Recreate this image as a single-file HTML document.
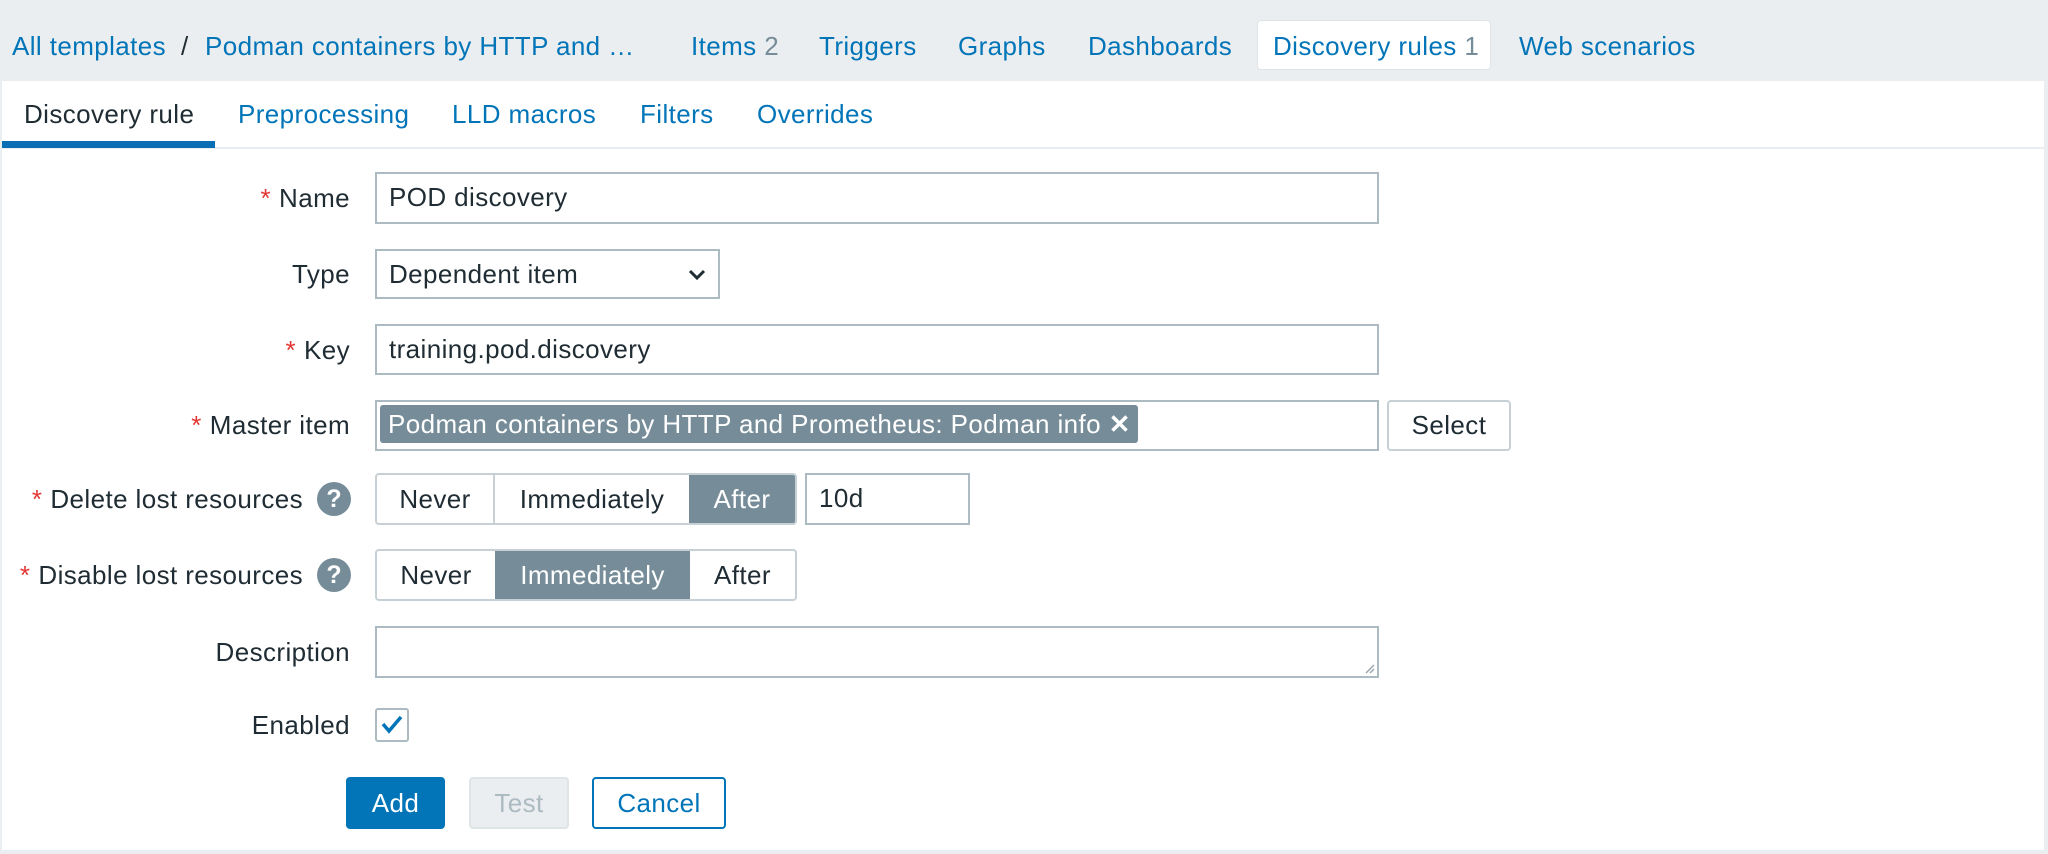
<!DOCTYPE html>
<html><head><meta charset="utf-8"><style>
*{box-sizing:border-box;margin:0;padding:0}
body{width:2048px;height:854px;background:#ebeef0;font-family:"Liberation Sans",Arial,sans-serif;font-size:26px;letter-spacing:0.4px;color:#1f2c33;position:relative;overflow:hidden}
.a{position:absolute;white-space:nowrap}
.lk{color:#0275b8}
.g{color:#768d99}
.top{line-height:48px;top:22px}
.main{position:absolute;left:2px;top:81px;width:2042px;height:769px;background:#fff}
.tabline{position:absolute;left:2px;top:147px;width:2042px;height:2px;background:#ebeef0}
.lbl{position:absolute;right:1698px;text-align:right;line-height:50px;white-space:nowrap}
.req{color:#e33734;margin-right:8px}
.inp{position:absolute;border:2px solid #acbbc2;background:#fff;line-height:46px;padding-left:12px}
.seg{position:absolute;border:2px solid #c7d0d5;border-radius:4px;display:flex;overflow:hidden;background:#fff}
.seg div{text-align:center;line-height:48px}
.seg .on{background:#768d99;color:#fff}
.q{position:absolute;width:34px;height:34px;border-radius:50%;background:#768d99;color:#fff;font-weight:bold;text-align:center;line-height:34px;font-size:25px;letter-spacing:0}
.btn{position:absolute;border-radius:4px;text-align:center;line-height:48px}
</style></head><body>
<div class="a lk top" style="left:12px">All templates</div>
<div class="a top" style="left:181px">/</div>
<div class="a lk top" style="left:205px">Podman containers by HTTP and …</div>
<div class="a lk top" style="left:691px">Items <span class="g">2</span></div>
<div class="a lk top" style="left:819px">Triggers</div>
<div class="a lk top" style="left:958px">Graphs</div>
<div class="a lk top" style="left:1088px">Dashboards</div>
<div class="a" style="left:1258px;top:21px;width:232px;height:48px;background:#fff;border-radius:3px;box-shadow:0 0 0 1px #dfe4e7"></div>
<div class="a lk top" style="left:1273px">Discovery rules <span class="g">1</span></div>
<div class="a lk top" style="left:1519px">Web scenarios</div>

<div class="main"></div>
<div class="tabline"></div>
<div class="a" style="left:2px;top:141px;width:213px;height:7px;background:#0a6eb4"></div>
<div class="a" style="left:24px;top:99px;line-height:30px">Discovery rule</div>
<div class="a lk" style="left:238px;top:99px;line-height:30px">Preprocessing</div>
<div class="a lk" style="left:452px;top:99px;line-height:30px">LLD macros</div>
<div class="a lk" style="left:640px;top:99px;line-height:30px">Filters</div>
<div class="a lk" style="left:757px;top:99px;line-height:30px">Overrides</div>

<div class="lbl" style="top:173px"><span class="req">*</span>Name</div>
<div class="inp" style="left:375px;top:172px;width:1004px;height:52px">POD discovery</div>

<div class="lbl" style="top:249px">Type</div>
<div class="inp" style="left:375px;top:249px;width:345px;height:50px">Dependent item
<svg style="position:absolute;right:12px;top:17px" width="18" height="14" viewBox="0 0 18 14"><path d="M2 3l7 7 7-7" fill="none" stroke="#1f2c33" stroke-width="3"/></svg></div>

<div class="lbl" style="top:325px"><span class="req">*</span>Key</div>
<div class="inp" style="left:375px;top:324px;width:1004px;height:51px">training.pod.discovery</div>

<div class="lbl" style="top:400px"><span class="req">*</span>Master item</div>
<div class="inp" style="left:375px;top:400px;width:1004px;height:51px;padding:0"></div>
<div class="a" style="left:380px;top:405px;width:758px;height:38px;background:#768d99;border-radius:3px;color:#fff;line-height:38px;padding-left:8px">Podman containers by HTTP and Prometheus: Podman info <span style="font-weight:bold">✕</span></div>
<div class="btn" style="left:1387px;top:400px;width:124px;height:51px;border:2px solid #c7d0d5;line-height:47px;background:#fff">Select</div>

<div class="lbl" style="top:474px;right:1745px"><span class="req">*</span>Delete lost resources</div>
<div class="q" style="left:317px;top:482px">?</div>
<div class="seg" style="left:375px;top:473px;width:422px;height:52px"><div style="width:118px;border-right:2px solid #c7d0d5">Never</div><div style="width:194px">Immediately</div><div class="on" style="width:106px">After</div></div>
<div class="inp" style="left:805px;top:473px;width:165px;height:52px">10d</div>

<div class="lbl" style="top:550px;right:1745px"><span class="req">*</span>Disable lost resources</div>
<div class="q" style="left:317px;top:558px">?</div>
<div class="seg" style="left:375px;top:549px;width:422px;height:52px"><div style="width:118px">Never</div><div class="on" style="width:195px">Immediately</div><div style="width:105px">After</div></div>

<div class="lbl" style="top:627px">Description</div>
<div class="inp" style="left:375px;top:626px;width:1004px;height:52px">
<svg style="position:absolute;right:2px;bottom:2px" width="10" height="10" viewBox="0 0 10 10"><path d="M9 1L1 9M9 5L5 9" stroke="#9aa7ae" stroke-width="1.5"/></svg></div>

<div class="lbl" style="top:700px">Enabled</div>
<div class="a" style="left:375px;top:708px;width:34px;height:34px;border:2px solid #acbbc2;border-radius:3px;background:#fff">
<svg style="position:absolute;left:4px;top:5px" width="22" height="20" viewBox="0 0 22 20"><path d="M2 9l6 7L20 2" fill="none" stroke="#0275b8" stroke-width="3.5"/></svg></div>

<div class="btn" style="left:346px;top:777px;width:99px;height:52px;background:#0275b8;color:#fff;line-height:52px">Add</div>
<div class="btn" style="left:469px;top:777px;width:100px;height:52px;background:#ebeef0;border:2px solid #dfe4e7;color:#acbbc2">Test</div>
<div class="btn" style="left:592px;top:777px;width:134px;height:52px;border:2px solid #0275b8;color:#0275b8;background:#fff">Cancel</div>
</body></html>
